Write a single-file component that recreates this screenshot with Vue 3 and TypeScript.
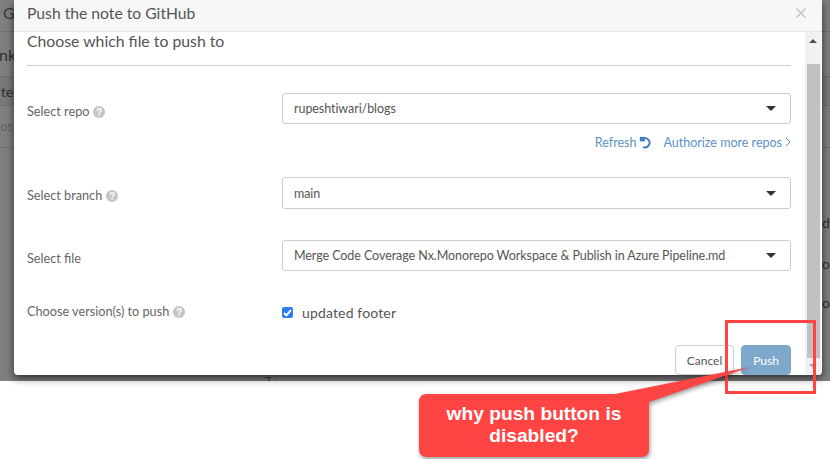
<template>
  <div class="page">
    <div class="backdrop">
      <div class="bg-row bg-row--top"><span>G</span></div>
      <div class="bg-row bg-row--tabs"><span>nk</span></div>
      <div class="bg-row bg-row--active"><span>te</span></div>
      <div class="bg-row bg-row--date"><span>05</span></div>
      <span class="bg-right bg-right--a">de</span>
      <span class="bg-right bg-right--b">o</span>
      <span class="bg-right bg-right--c">o</span>
      <div class="bg-tick"><span>7</span></div>
    </div>

    <div class="modal" role="dialog" aria-label="Push the note to GitHub">
      <header class="modal-header">
        <h4>Push the note to GitHub</h4>
        <button class="close" aria-label="Close">
          <svg width="10" height="10" viewBox="0 0 10 10" fill="none">
            <path d="M0.5 0.5 9.5 9.5M9.5 0.5 0.5 9.5" stroke="#c4c4c4" stroke-width="1.5" />
          </svg>
        </button>
      </header>

      <div class="modal-scroll">
        <div class="modal-body">
          <h5 class="section-title">Choose which file to push to</h5>

          <div class="form-row form-row--repo">
            <label>Select repo <HelpIcon /></label>
            <div class="select">
              <span>rupeshtiwari/blogs</span>
              <i class="caret"></i>
            </div>
          </div>

          <div class="links">
            <a>Refresh
              <svg width="13" height="13" viewBox="0 0 13 13" fill="none">
                <path d="M3.2 3.1A4.6 4.6 0 1 1 4 11" stroke="#3f7fbd" stroke-width="1.9" />
                <path d="M0.8 0.9H5.9V5.4H0.8Z" fill="#3f7fbd" />
              </svg>
            </a>
            <a>Authorize more repos
              <svg width="6" height="10" viewBox="0 0 6 10" fill="none">
                <path d="M1 1 5 5 1 9" stroke="#5b92c8" stroke-width="1" />
              </svg>
            </a>
          </div>

          <div class="form-row form-row--branch">
            <label>Select branch <HelpIcon /></label>
            <div class="select select--tall">
              <span>main</span>
              <i class="caret"></i>
            </div>
          </div>

          <div class="form-row form-row--file">
            <label>Select file</label>
            <div class="select">
              <span>{{ fileName }}</span>
              <i class="caret"></i>
            </div>
          </div>

          <div class="form-row form-row--version">
            <label>Choose version(s) to push <HelpIcon /></label>
            <div class="version">
              <span class="checkbox">
                <svg width="9" height="8" viewBox="0 0 9 8" fill="none">
                  <path d="M1 4 3.4 6.4 8 1.2" stroke="#fff" stroke-width="2" />
                </svg>
              </span>
              <span class="version-name">updated footer</span>
            </div>
          </div>

          <footer class="modal-footer">
            <button class="btn">Cancel</button>
            <button class="btn btn--primary">Push</button>
          </footer>
        </div>

        <div class="scrollbar" aria-hidden="true">
          <i class="arrow arrow--up"></i>
          <div class="thumb"></div>
          <i class="arrow arrow--down"></i>
        </div>
      </div>
    </div>

    <!-- annotation drawn over the screenshot -->
    <div class="highlight"></div>
    <svg class="callout-shape" width="830" height="459" viewBox="0 0 830 459">
      <path
        d="M427 394H615L750 367 649 402V449Q649 457 641 457H427Q419 457 419 449V402Q419 394 427 394Z"
        fill="#ff4444"
      />
    </svg>
    <div class="callout-text">why push button is<br />disabled?</div>
  </div>
</template>

<script setup lang="ts">
import { h } from 'vue'

const fileName = 'Merge Code Coverage Nx.Monorepo Workspace & Publish in Azure Pipeline.md'

// small grey question-mark badge next to the labels
const HelpIcon = () =>
  h('svg', { class: 'help', width: 12, height: 12, viewBox: '0 0 12 12', style: 'vertical-align:-2px' }, [
    h('circle', { cx: 6, cy: 6, r: 6, fill: '#c6c6c6' }),
    h('path', {
      d: 'M4.1 4.7C4.2 3.4 5 2.8 6 2.8 7.2 2.8 8 3.5 8 4.5 8 5.8 6.1 5.8 6.1 7.2',
      fill: 'none',
      stroke: '#fff',
      'stroke-width': 1.4,
    }),
    h('rect', { x: 5.3, y: 8, width: 1.6, height: 1.6, fill: '#fff' }),
  ])
</script>

<style>
body {
  background: #fff;
}
</style>

<style scoped>
.page {
  position: relative;
  width: 830px;
  height: 459px;
  overflow: hidden;
  background: #fff;
  font-family: Lato, "Noto Sans", sans-serif;
}

.backdrop {
  position: relative;
  height: 381px;
  overflow: hidden;
  background: #7f7f7f;
  color: #303030;
  font-size: 15px;
}

.bg-row {
  border-bottom: 1px solid #6f6f6f;
  display: flex;
  align-items: center;
}

.bg-row--top {
  padding: 0 0 6px 3px;
  height: 25px;
  font-size: 16px;
  color: #383838;
}

.bg-row--tabs {
  height: 44px;
  margin-left: -1px;
  font-size: 16px;
}

.bg-row--active {
  height: 28px;
  background: #787878;
  font-size: 14px;
}

.bg-row--active span {
  margin-left: 1px;
}

.bg-row--date {
  height: 41px;
  font-size: 10px;
  color: #5c5c5c;
  padding-left: 1px;
}

.bg-right {
  position: absolute;
  left: 822px;
  font-size: 14px;
}
.bg-right--a { top: 214px; }
.bg-right--b { top: 255px; }
.bg-right--c { top: 294px; }

.bg-tick {
  position: absolute;
  left: 237px;
  width: 40px;
  top: 372px;
  bottom: 0;
  box-sizing: border-box;
  border-left: 1px solid #6f6f6f;
  border-right: 1px solid #6f6f6f;
  padding-left: 26px;
  font-size: 12px;
  line-height: 17px;
}

.modal {
  position: absolute;
  left: 14px;
  top: 0;
  width: 808px;
  height: 375px;
  display: flex;
  flex-direction: column;
  background: #fff;
  border-radius: 0 0 4px 4px;
  box-shadow: 0 3px 9px rgba(0, 0, 0, 0.65);
  overflow: hidden;
}

.modal-header {
  flex: none;
  height: 32px;
  box-sizing: border-box;
  padding: 0 16px 5px 13px;
  display: flex;
  align-items: center;
  justify-content: space-between;
  background: #f7f7f7;
  border-bottom: 1px solid #e5e5e5;
}

.modal-header h4 {
  margin: 0;
  font-size: 15.7px;
  font-weight: 400;
  color: #555;
}

.close {
  padding: 0;
  border: 0;
  background: none;
  display: flex;
}

.modal-scroll {
  flex: 1;
  display: flex;
  min-height: 0;
}

.modal-body {
  flex: 1;
  padding: 0 14px 0 13px;
}

.section-title {
  margin: 0;
  height: 33px;
  line-height: 18px;
  font-size: 15.8px;
  font-weight: 400;
  color: #555;
  border-bottom: 1px solid #ccc;
}

.form-row {
  display: grid;
  grid-template-columns: 255px 1fr;
  align-items: center;
}

.form-row label {
  padding-top: 4px;
  font-size: 12.7px;
  color: #666;
}

.form-row--repo { margin-top: 27px; }
.form-row--branch { margin-top: 17px; }
.form-row--file { margin-top: 31px; }
.form-row--version { margin-top: 32px; height: 17px; }

.form-row--version label {
  padding-top: 0;
  padding-bottom: 3px;
}

.select {
  height: 31px;
  box-sizing: border-box;
  padding: 0 14px 0 11px;
  display: flex;
  align-items: center;
  justify-content: space-between;
  border: 1px solid #ccc;
  border-radius: 3px;
  font-size: 12.5px;
  letter-spacing: -0.07px;
  color: #555;
}

.select--tall {
  height: 32px;
}

.caret {
  width: 0;
  height: 0;
  border-left: 5px solid transparent;
  border-right: 5px solid transparent;
  border-top: 5px solid #333;
}

.links {
  height: 36px;
  display: flex;
  align-items: center;
  justify-content: flex-end;
  gap: 11px;
  font-size: 12.5px;
  color: #5b92c8;
}

.links a {
  display: flex;
  align-items: center;
  gap: 3px;
}

.version {
  display: flex;
  align-items: center;
  gap: 9px;
}

.checkbox {
  width: 11px;
  height: 11px;
  display: flex;
  align-items: center;
  justify-content: center;
  background: #2f7bf0;
  border-radius: 2px;
}

.version-name {
  font-size: 14px;
  letter-spacing: 0.15px;
  color: #555;
}

.modal-footer {
  margin-top: 25px;
  display: flex;
  justify-content: flex-end;
  gap: 7px;
}

.btn {
  height: 30px;
  width: 59px;
  padding: 0;
  background: #fff;
  border: 1px solid #ccc;
  border-radius: 4px;
  font-family: inherit;
  font-size: 12px;
  color: #555;
}

.btn--primary {
  width: 50px;
  background: #7fa8cd;
  border-color: #7fa8cd;
  color: #fff;
}

.scrollbar {
  flex: none;
  width: 16px;
  margin-right: 1px;
  position: relative;
  background: #f1f1f1;
}

.thumb {
  position: absolute;
  left: 2px;
  right: 1px;
  top: 32px;
  height: 294px;
  background: #c1c1c1;
}

.arrow {
  position: absolute;
  left: 4px;
  width: 0;
  height: 0;
  border-left: 4px solid transparent;
  border-right: 4px solid transparent;
}

.arrow--up {
  top: 7px;
  border-bottom: 4px solid #505050;
}

.arrow--down {
  bottom: 7px;
  border-top: 4px solid #a3a3a3;
}

.highlight {
  position: absolute;
  left: 725px;
  top: 320px;
  width: 91px;
  height: 74px;
  box-sizing: border-box;
  border: 3px solid #ff4444;
}

.callout-shape {
  position: absolute;
  left: 0;
  top: 0;
  filter: drop-shadow(1px 2px 2px rgba(0, 0, 0, 0.4));
}

.callout-text {
  position: absolute;
  left: 419px;
  top: 403px;
  width: 230px;
  text-align: center;
  font-family: "Liberation Sans", Arial, sans-serif;
  font-weight: 700;
  font-size: 19.2px;
  line-height: 22px;
  color: #fff;
}
</style>
